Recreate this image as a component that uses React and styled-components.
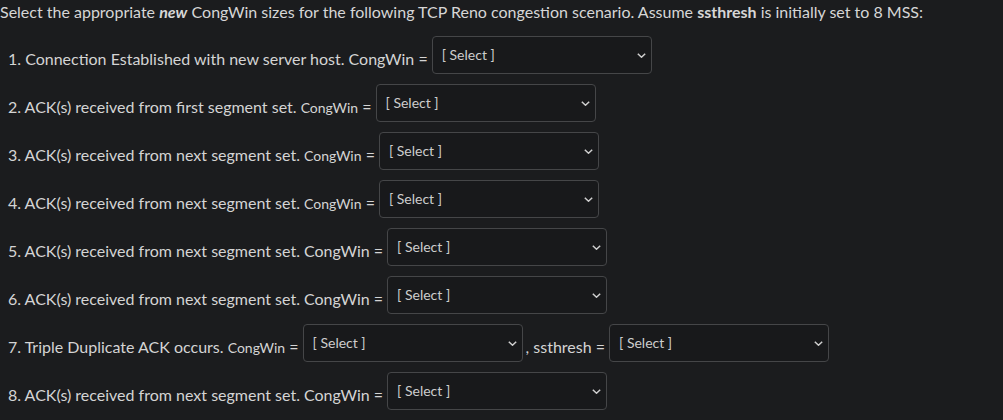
import React from "react";
import styled, { createGlobalStyle } from "styled-components";

const Global = createGlobalStyle`
  html, body {
    margin: 0;
    padding: 0;
    background: #1b1c1e;
  }
  body {
    font-family: Lato, "Open Sans", sans-serif;
    color: #d4d4d4;
  }
`;

const Page = styled.div`
  width: 1003px;
  height: 420px;
  overflow: hidden;
  background: #1b1c1e;
  font-family: Lato, "Open Sans", sans-serif;
  font-size: 16px;
`;

const Intro = styled.p`
  margin: 0;
  padding: 2px 0 0 0;
  line-height: 20px;
  color: #d6d6d6;
`;

const Rows = styled.div`
  display: flex;
  flex-direction: column;
  gap: 10px;
  margin-top: 14px;
  padding-left: 8px;
`;

const Row = styled.div`
  display: flex;
  align-items: center;
  height: 38px;
`;

const Label = styled.span`
  line-height: 20px;
  padding-top: 8px;
  white-space: pre;
  color: #d4d4d4;
`;

const Small = styled.span`
  font-size: 14px;
`;

const SelectWrap = styled.span`
  position: relative;
  display: inline-flex;
  margin: 0 3px 0 4px;
`;

const NativeSelect = styled.select`
  appearance: none;
  -webkit-appearance: none;
  width: 220px;
  height: 38px;
  box-sizing: border-box;
  padding: 0 24px 2px 9px;
  background: #18191b;
  border: 1px solid #454648;
  border-radius: 4px;
  color: #cdcdcd;
  font-family: Lato, "Open Sans", sans-serif;
  font-size: 14px;
  outline: none;
`;

const Chevron = styled.svg`
  position: absolute;
  right: 6px;
  top: 50%;
  margin-top: -2px;
  width: 9px;
  height: 5px;
  pointer-events: none;
`;

function Select() {
  return (
    <SelectWrap>
      <NativeSelect defaultValue="">
        <option value="">[ Select ]</option>
      </NativeSelect>
      <Chevron viewBox="0 0 9 5">
        <path d="M0.8 0.8 L4.5 4.2 L8.2 0.8" fill="none" stroke="#d0d0d0" strokeWidth="1.5" />
      </Chevron>
    </SelectWrap>
  );
}

const rows = [
  { text: "1. Connection Established with new server host. CongWin =", small: false },
  { text: "2. ACK(s) received from first segment set. ", small: true },
  { text: "3. ACK(s) received from next segment set. ", small: true },
  { text: "4. ACK(s) received from next segment set. ", small: true },
  { text: "5. ACK(s) received from next segment set. CongWin =", small: false },
  { text: "6. ACK(s) received from next segment set. CongWin =", small: false },
];

export default function App() {
  return (
    <Page>
      <Global />
      <Intro>
        Select the appropriate <b><i>new</i></b> CongWin sizes for the following TCP Reno congestion
        scenario. Assume <b>ssthresh</b> is initially set to 8 MSS:
      </Intro>
      <Rows>
        {rows.map((r, i) => (
          <Row key={i}>
            <Label>
              {r.text}
              {r.small && <Small>CongWin</Small>}
              {r.small && " ="}
            </Label>
            <Select />
          </Row>
        ))}
        <Row>
          <Label>
            7. Triple Duplicate ACK occurs. <Small>CongWin</Small> =
          </Label>
          <Select />
          <Label>, ssthresh =</Label>
          <Select />
        </Row>
        <Row>
          <Label>8. ACK(s) received from next segment set. CongWin =</Label>
          <Select />
        </Row>
      </Rows>
    </Page>
  );
}
